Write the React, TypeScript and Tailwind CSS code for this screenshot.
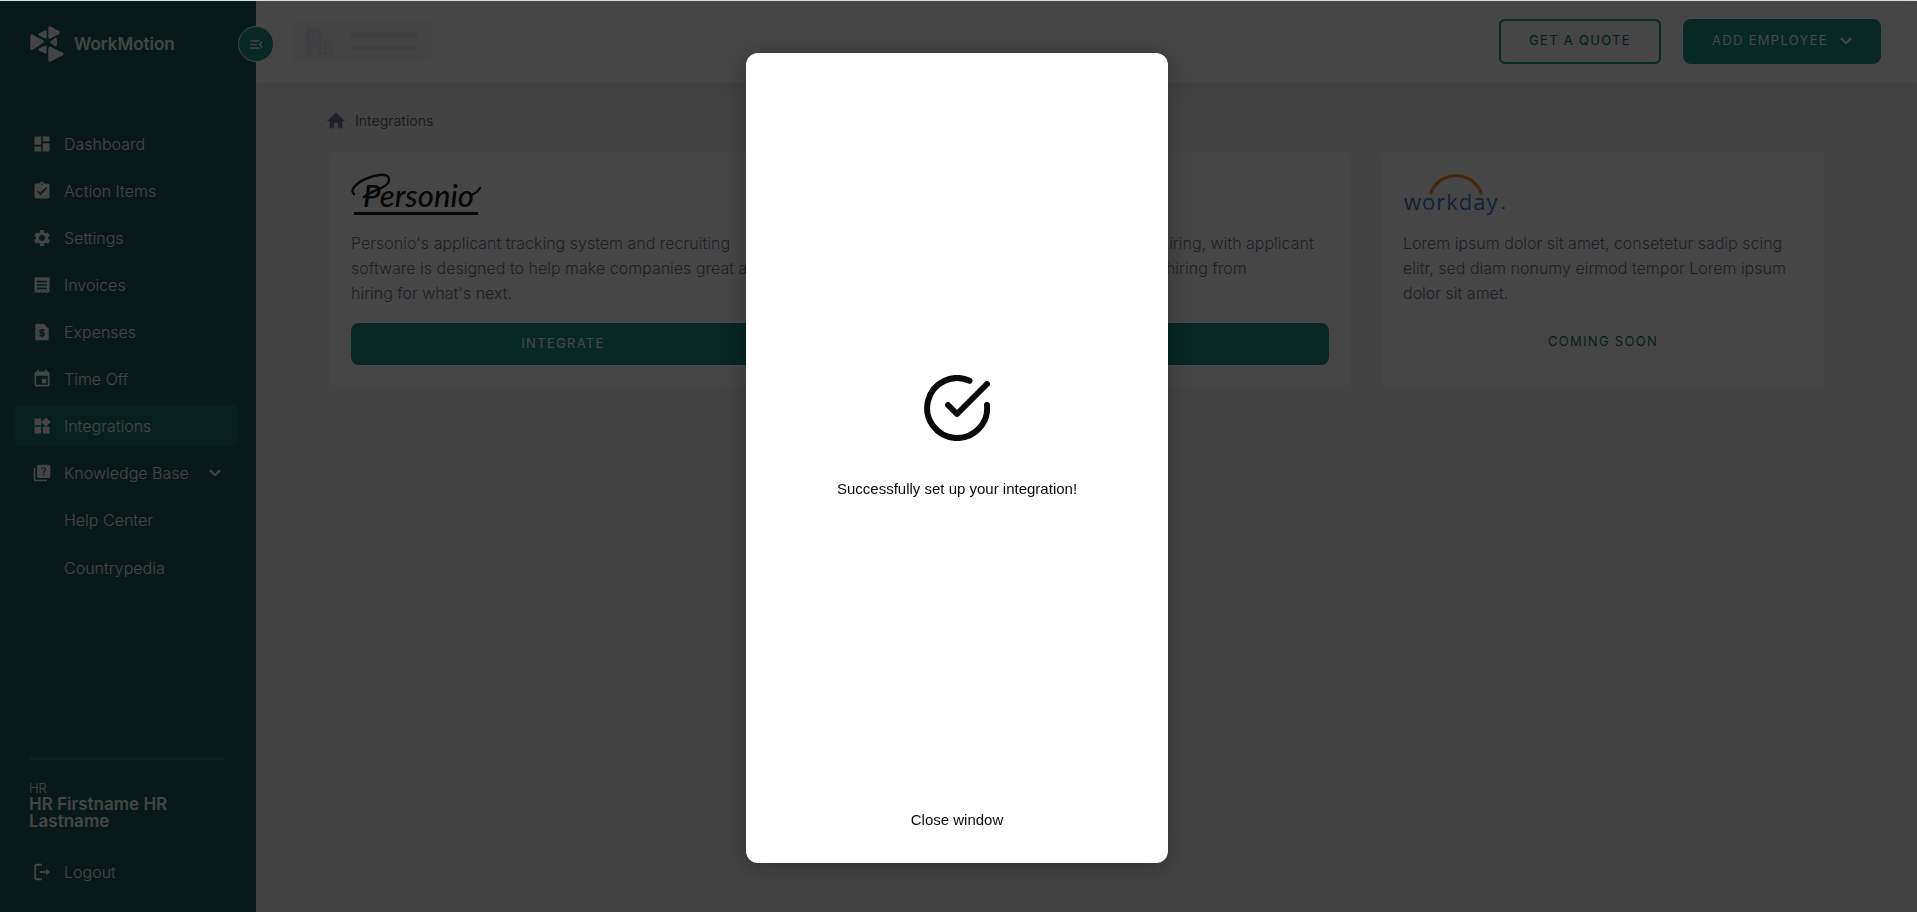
import type { ReactNode } from "react";
import type { IconType } from "react-icons";
import {
  MdAssignmentTurnedIn,
  MdDashboard,
  MdEvent,
  MdHome,
  MdMenuOpen,
  MdQuiz,
  MdReceipt,
  MdRequestPage,
  MdSettings,
  MdWidgets,
} from "react-icons/md";

type NavEntry = { label: string; icon: IconType; active?: boolean; expandable?: boolean };

const navEntries: NavEntry[] = [
  { label: "Dashboard", icon: MdDashboard },
  { label: "Action Items", icon: MdAssignmentTurnedIn },
  { label: "Settings", icon: MdSettings },
  { label: "Invoices", icon: MdReceipt },
  { label: "Expenses", icon: MdRequestPage },
  { label: "Time Off", icon: MdEvent },
  { label: "Integrations", icon: MdWidgets, active: true },
  { label: "Knowledge Base", icon: MdQuiz, expandable: true },
];

const knowledgeLinks = ["Help Center", "Countrypedia"];

function Chevron() {
  return (
    <svg viewBox="0 0 12 8" className="h-2 w-3" fill="none" stroke="currentColor" strokeWidth="2" aria-hidden="true">
      <path d="M1 1.2 6 6.2 11 1.2" />
    </svg>
  );
}

function WorkMotionLogo() {
  return (
    <div className="flex items-center gap-2.5 text-[#f4f4f4]">
      <svg
        viewBox="0 0 34 36"
        className="h-9 w-[34px]"
        fill="currentColor"
        stroke="currentColor"
        strokeWidth="3"
        strokeLinejoin="round"
        aria-hidden="true"
      >
        <path d="M1.8 9.8 12.4 15.6 1.8 22.4Z" />
        <path d="M19.8 1.8 28.4 6.6 19.8 11.2Z" />
        <path d="M19.8 22.2 32 28.2 19.8 34.2Z" />
        <path d="M15.6 5.6V11.4L9.4 8.6Z" strokeWidth="2.2" />
        <path d="M25.8 13V19.2L21.2 16.1Z" strokeWidth="2.2" />
        <path d="M15.6 20.8V26.6L9.4 23.6Z" strokeWidth="2.2" />
      </svg>
      <span className="text-[17px] leading-6 font-semibold">WorkMotion</span>
    </div>
  );
}

function PersonioLogo() {
  return (
    <svg viewBox="0 0 132 43" className="h-[43px] w-[132px]" role="img" aria-label="Personio">
      <path
        d="M3 21C-3 16 10 5 28 2C41 0 40 10 32 14C27 17 20 18 13 24"
        fill="none"
        stroke="#000"
        strokeWidth="2.4"
        strokeLinecap="round"
      />
      <text x="12" y="34" fontFamily="Lato" fontStyle="italic" fontWeight="500" fontSize="31" fill="#000">
        Personio
      </text>
      <path d="M120 22Q126 20 129 15" fill="none" stroke="#000" strokeWidth="2.4" strokeLinecap="round" />
      <path d="M3 40.5H127" stroke="#000" strokeWidth="3" />
    </svg>
  );
}

function WorkdayLogo() {
  return (
    <svg viewBox="0 0 104 43" className="h-[43px] w-[104px]" role="img" aria-label="workday">
      <path d="M28 20C36-3 70-3 78 20" fill="none" stroke="#e88a10" strokeWidth="3.2" strokeLinecap="round" />
      <text x="1" y="36.5" fontFamily="Open Sans" fontWeight="500" fontSize="22" letterSpacing="1" fill="#2a68c0">
        workday
      </text>
      <circle cx="100.5" cy="35" r="1.2" fill="#2a68c0" />
    </svg>
  );
}

function Sidebar() {
  return (
    <aside className="relative flex w-64 shrink-0 flex-col bg-[#024a46] text-[#f4f4f4]">
      <div className="px-[30px] pt-[25px]">
        <WorkMotionLogo />
      </div>
      <button
        type="button"
        aria-label="Collapse menu"
        className="absolute top-[25px] -right-[18px] flex size-9 items-center justify-center rounded-full border border-[#f4f4f4] bg-[#008272]"
      >
        <MdMenuOpen className="size-[17px]" />
      </button>

      <nav className="mt-[61px] flex flex-col gap-1.5 pr-[18px] pl-[15px] text-base font-light">
        {navEntries.map(({ label, icon: Icon, active, expandable }) => (
          <a
            key={label}
            href="#"
            className={
              active
                ? "flex h-[41px] items-center gap-3 rounded-md bg-[#026658] px-[17px]"
                : "flex h-[41px] items-center gap-3 rounded-md px-[17px]"
            }
          >
            <Icon className="size-5" />
            <span>{label}</span>
            {expandable && (
              <span className="ml-auto">
                <Chevron />
              </span>
            )}
          </a>
        ))}
        {knowledgeLinks.map((label) => (
          <a key={label} href="#" className="flex h-[42px] items-center pl-[49px]">
            {label}
          </a>
        ))}
      </nav>

      <div className="mt-auto px-[29px] pb-7">
        <div className="h-[3px] w-[195px] rounded-full bg-[#027060]" />
        <p className="mt-5 text-[13px] leading-4 font-light">HR</p>
        <p className="text-[17px] leading-[17px] font-semibold">HR Firstname HR Lastname</p>
        <a href="#" className="mt-[30px] flex items-center gap-3 pl-[3px] text-base font-light">
          <svg viewBox="0 0 22 22" className="size-5" fill="none" stroke="currentColor" strokeWidth="2" aria-hidden="true">
            <path d="M11 3H5.5Q3.5 3 3.5 5V17Q3.5 19 5.5 19H11" />
            <path d="M8.5 11H17" />
            <path d="M15.5 7.2 19.6 11 15.5 14.8Z" fill="currentColor" stroke="none" />
          </svg>
          Logout
        </a>
      </div>
    </aside>
  );
}

function TopBar() {
  return (
    <header className="flex h-[82px] items-center justify-between bg-[#fafafa] px-9 pb-0.5 shadow-[0_8px_12px_rgba(0,0,0,0.05)]">
      <div className="flex h-[42px] w-[140px] items-center gap-2 rounded-md bg-[#f4f4f4] px-3.5" aria-hidden="true">
        <svg viewBox="0 0 27 27" className="size-[27px] shrink-0" fill="#dfe1e6">
          <path
            fillRule="evenodd"
            d="M0 1Q0 0 1 0H11L16 3V27H11V20H6V27H0ZM4 4.5V7H6V4.5ZM9 4.5V7H11V4.5ZM4 9.5V12H6V9.5ZM9 9.5V12H11V9.5ZM4 14.5V17H6V14.5ZM9 14.5V17H11V14.5Z"
          />
          <path
            fillRule="evenodd"
            d="M17.5 11H23L27 14V27H17.5ZM20 14.5V16.5H21.5V14.5ZM23.5 14.5V16.5H25V14.5ZM20 18V20H21.5V18ZM23.5 18V20H25V18ZM20 22V24H21.5V22ZM23.5 22V24H25V22Z"
          />
        </svg>
        <span className="h-7 w-px bg-[#dfe1e6]" />
        <span className="flex flex-1 flex-col gap-[7px]">
          <span className="h-[5px] rounded-full bg-[#dfe1e6]" />
          <span className="h-[5px] rounded-full bg-[#dfe1e6]" />
        </span>
      </div>
      <div className="flex gap-[22px]">
        <button
          type="button"
          className="h-[45px] w-[162px] rounded-md border-2 border-[#008272] text-[13px] tracking-widest text-[#00655a]"
        >
          GET A QUOTE
        </button>
        <button
          type="button"
          className="flex h-[45px] w-[198px] items-center justify-center gap-3 rounded-lg bg-[#008272] text-[13px] tracking-widest text-white"
        >
          ADD EMPLOYEE
          <Chevron />
        </button>
      </div>
    </header>
  );
}

function IntegrationCard({ logo, children, available }: { logo?: ReactNode; children: ReactNode; available: boolean }) {
  return (
    <article className="flex flex-col rounded-lg border border-[#f2f2f2] bg-[#fafafa] px-[21px] pt-[21px] pb-[22px]">
      <div className="h-[43px]">{logo}</div>
      <p className="mt-[15px] h-[75px] text-base leading-[25px] font-light text-[#62627a]">{children}</p>
      {available ? (
        <button type="button" className="mt-[17px] h-[42px] rounded-lg bg-[#008272] text-[13px] tracking-widest text-white">
          INTEGRATE
        </button>
      ) : (
        <p className="mt-[17px] h-[42px] text-center text-[13px] leading-[36px] tracking-widest text-[#00655a]">COMING SOON</p>
      )}
    </article>
  );
}

function SuccessDialog() {
  return (
    <div className="fixed inset-x-0 top-px bottom-0 flex justify-center bg-[#0a0a0a]/75 pt-[52px] pr-[3px] pb-[49px]">
      <div
        role="dialog"
        aria-modal="true"
        aria-labelledby="dialog-message"
        className="flex w-[422px] flex-col items-center rounded-xl bg-white pt-[322px] pb-[31px] font-['Liberation_Sans',sans-serif] text-[#0a0a0a] shadow-[0_4px_24px_rgba(0,0,0,0.3)]"
      >
        <svg
          viewBox="0 0 66 66"
          className="size-[66px]"
          fill="none"
          stroke="#0a0a0a"
          strokeWidth="6"
          strokeLinecap="round"
          strokeLinejoin="round"
          aria-hidden="true"
        >
          <path d="M45.5 5.700A30 30 0 1 0 63 30" />
          <path d="M24 30 33 39 63 9" />
        </svg>
        <p id="dialog-message" className="mt-9 text-[15px] leading-6">
          Successfully set up your integration!
        </p>
        <button type="button" className="mt-auto text-[15px] leading-6">
          Close window
        </button>
      </div>
    </div>
  );
}

export default function App() {
  return (
    <div className="flex min-h-screen border-t border-[#d6dfdc] bg-[#f0f0f0] font-['Inter',sans-serif]">
      <Sidebar />
      <div className="flex min-w-0 flex-1 flex-col">
        <TopBar />
        <main className="pr-[92px] pl-[73px]">
          <div className="-ml-1 flex h-[68px] items-center gap-2 pt-2 text-sm text-[#5c5c6e]">
            <MdHome className="size-[22px] text-[#62658c]" />
            <span>Integrations</span>
          </div>
          <div className="grid grid-cols-[468fr_524fr_444fr] gap-[30px]">
            <IntegrationCard logo={<PersonioLogo />} available>
              Personio's applicant tracking system and recruiting software is designed to help make companies great at hiring
              for what's next.
            </IntegrationCard>
            <IntegrationCard available>
              Everything that a growing team needs for hiring, with applicant
              <br />
              tracking, onboarding, reports and tools for hiring from
            </IntegrationCard>
            <IntegrationCard logo={<WorkdayLogo />} available={false}>
              Lorem ipsum dolor sit amet, consetetur sadip scing elitr, sed diam nonumy eirmod tempor Lorem ipsum dolor sit
              amet.
            </IntegrationCard>
          </div>
        </main>
      </div>
      <SuccessDialog />
    </div>
  );
}
